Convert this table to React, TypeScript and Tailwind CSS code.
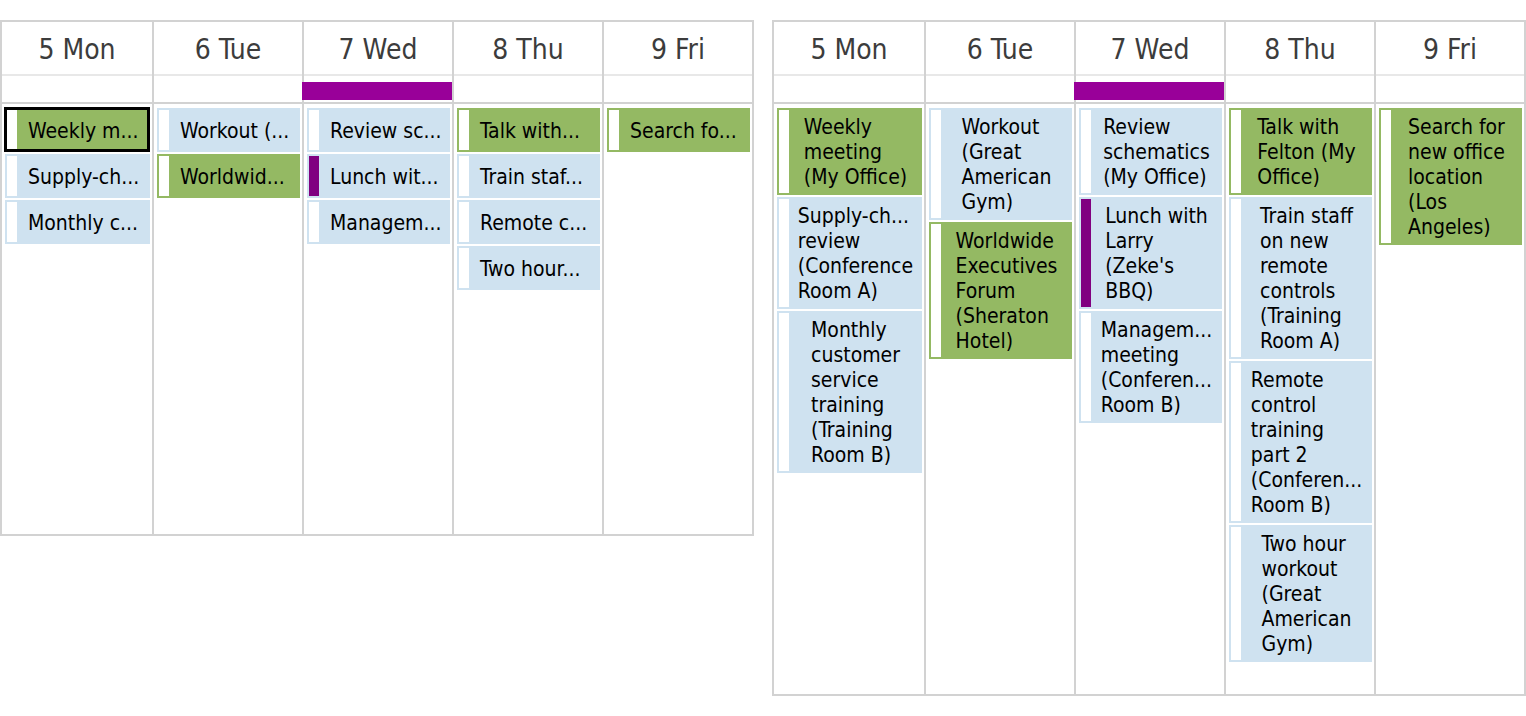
import React from "react"

type Appt = {
  short: string
  lines: string[]
  color: "blue" | "green"
  status?: boolean
  selected?: boolean
}

type Day = {
  label: string
  allDay?: boolean
  items: Appt[]
}

// texts as the control shows them: one clipped line in the narrow view,
// wrapped lines in the tall view
const days: Day[] = [
  {
    label: "5 Mon",
    items: [
      { short: "Weekly m...", lines: ["Weekly", "meeting", "(My Office)"], color: "green", selected: true },
      { short: "Supply-ch...", lines: ["Supply-ch...", "review", "(Conference", "Room A)"], color: "blue" },
      { short: "Monthly c...", lines: ["Monthly", "customer", "service", "training", "(Training", "Room B)"], color: "blue" }
    ]
  },
  {
    label: "6 Tue",
    items: [
      { short: "Workout (...", lines: ["Workout", "(Great", "American", "Gym)"], color: "blue" },
      { short: "Worldwid...", lines: ["Worldwide", "Executives", "Forum", "(Sheraton", "Hotel)"], color: "green" }
    ]
  },
  {
    label: "7 Wed",
    allDay: true,
    items: [
      { short: "Review sc...", lines: ["Review", "schematics", "(My Office)"], color: "blue" },
      { short: "Lunch wit...", lines: ["Lunch with", "Larry", "(Zeke's", "BBQ)"], color: "blue", status: true },
      { short: "Managem...", lines: ["Managem...", "meeting", "(Conferen...", "Room B)"], color: "blue" }
    ]
  },
  {
    label: "8 Thu",
    items: [
      { short: "Talk with...", lines: ["Talk with", "Felton (My", "Office)"], color: "green" },
      { short: "Train staf...", lines: ["Train staff", "on new", "remote", "controls", "(Training", "Room A)"], color: "blue" },
      { short: "Remote c...", lines: ["Remote", "control", "training", "part 2", "(Conferen...", "Room B)"], color: "blue" },
      { short: "Two hour...", lines: ["Two hour", "workout", "(Great", "American", "Gym)"], color: "blue" }
    ]
  },
  {
    label: "9 Fri",
    items: [
      { short: "Search fo...", lines: ["Search for", "new office", "location", "(Los", "Angeles)"], color: "green" }
    ]
  }
]

function Appointment({ item, compact }: { item: Appt; compact: boolean }) {

  const fill = item.color === "green" ? "bg-[#94b963]" : "bg-[#cfe2f0]"

  let frame = "p-[2px]"
  if (item.selected && compact) frame = "border-[3px] border-black -ml-px -mt-px min-h-[45px]"
  else if (compact) frame = "p-[2px] min-h-[44px]"

  return (
    <div className={`flex ${fill} ${frame}`}>

      <div className={`w-[10px] shrink-0 ${item.status ? "bg-[#800080]" : "bg-white"}`}></div>

      {compact ? (
        <div className="flex-1 min-w-0 flex items-center pt-[3px] pl-[11px] pr-[4px] whitespace-nowrap">
          {item.short}
        </div>
      ) : (
        <div className="flex-1 min-w-0 flex justify-center pl-[8px] pr-[6px] pt-[5px] pb-[3px]">
          <div className="whitespace-nowrap">
            {item.lines.map((line, i) => (
              <div key={i}>
                {line}
              </div>
            ))}
          </div>
        </div>
      )}

    </div>
  )
}

function Calendar({ compact, height }: { compact: boolean; height: string }) {

  return (
    <div className={`flex flex-col border-2 border-[#d2d2d2] w-[754px] ${height}`}>

      {/* HEADER */}

      <div className="flex border-b-2 border-[#d2d2d2]">
        {days.map((day, i) => (
          <div
            key={day.label}
            className={i === 0 ? "w-[150px] flex flex-col" : "w-[150px] flex flex-col border-l-2 border-[#d2d2d2]"}
          >
            <div className="h-[52px] pt-[2px] flex items-center justify-center text-[28px] text-[#3c3c3c]">
              {day.label}
            </div>
            <div className="h-[2px] bg-[#e8e8e8]"></div>
            <div className="h-[26px] pt-[6px]">
              {day.allDay && (
                <div className="h-[18px] -ml-[2px] bg-[#990099]"></div>
              )}
            </div>
          </div>
        ))}
      </div>

      {/* BODY */}

      <div className="flex flex-1">
        {days.map((day, i) => (
          <div
            key={day.label}
            className={i === 0 ? "w-[150px] flex flex-col gap-[2px] pt-[4px] pl-[3px] pr-[2px]" : "w-[150px] flex flex-col gap-[2px] pt-[4px] pl-[3px] pr-[2px] border-l-2 border-[#d2d2d2]"}
          >
            {day.items.map((item, j) => (
              <Appointment key={j} item={item} compact={compact} />
            ))}
          </div>
        ))}
      </div>

    </div>
  )
}

export default function App() {

  return (
    <div className="min-h-screen bg-white pt-[20px] font-['DejaVu_Sans_Condensed','DejaVu_Sans',sans-serif] text-[21px] leading-[25px] text-black">

      <div className="flex items-start gap-[18px]">

        <Calendar compact={true} height="h-[516px]" />

        <Calendar compact={false} height="h-[676px]" />

      </div>

    </div>
  )
}
